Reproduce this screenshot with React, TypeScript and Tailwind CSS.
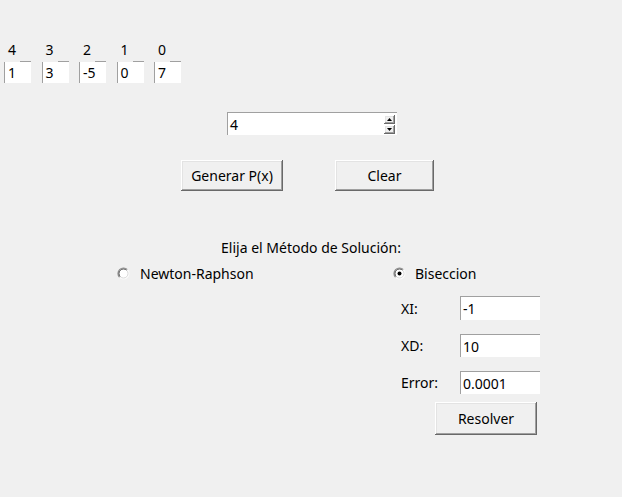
import { useState } from 'react';

const coefs = [
    { grado: '4', valor: '1' },
    { grado: '3', valor: '3' },
    { grado: '2', valor: '-5' },
    { grado: '1', valor: '0' },
    { grado: '0', valor: '7' },
];

const btnClass =
    'bg-[#f0f0f0] text-black shadow-[inset_-1px_-1px_#696969,inset_1px_1px_#ffffff,inset_-2px_-2px_#a0a0a0,inset_2px_2px_#e3e3e3]';

function Radio({ checked }: { checked: boolean }) {
    return (
        <svg width="13" height="13" viewBox="0 0 13 13" className="shrink-0">
            <circle cx="6.5" cy="6.5" r="5.5" fill="#ffffff" />
            <path d="M2.6 10.4 A5.5 5.5 0 0 1 10.4 2.6" fill="none" stroke="#8a8a8a" strokeWidth="1.2" />
            <path d="M3.3 9.7 A4.5 4.5 0 0 1 9.7 3.3" fill="none" stroke="#505050" strokeWidth="1" />
            <path d="M10.4 2.6 A5.5 5.5 0 0 1 2.6 10.4" fill="none" stroke="#ffffff" strokeWidth="1" />
            <path d="M9.7 3.3 A4.5 4.5 0 0 1 3.3 9.7" fill="none" stroke="#d8d8d8" strokeWidth="1" />
            {checked && <circle cx="6.5" cy="6.5" r="2" fill="#000000" />}
        </svg>
    );
}

function Entry({ value, className }: { value: string; className: string }) {
    return (
        <div className={`bg-white border-t border-l border-[#a0a0a0] pl-[2px] flex items-center text-black ${className}`}>
            {value}
        </div>
    );
}

export default function App() {
    const [metodo, setMetodo] = useState<'newton' | 'biseccion'>('biseccion');

    return (
        <div className="w-[622px] h-[497px] bg-[#f0f0f0] text-[14px] leading-[17px] text-black font-['Noto_Sans','Open_Sans',sans-serif] overflow-hidden">
            {/* Coeficientes */}
            <div className="flex gap-[10.5px] pl-[4px] pt-[41px]">
                {coefs.map((c) => (
                    <div key={c.grado} className="w-[27px] flex flex-col">
                        <span className="pl-[4px] h-[20px]">{c.grado}</span>
                        <div className="h-[1px] flex justify-end">
                            <div className="w-[11px] h-[1px] bg-[#a0a0a0]" />
                        </div>
                        <div className="h-[21px] bg-white border-l border-[#a0a0a0] pl-[3px] flex items-center">
                            {c.valor}
                        </div>
                    </div>
                ))}
            </div>

            {/* Grado */}
            <div className="pl-[227px] mt-[29px]">
                <div className="w-[170px] h-[23px] bg-white border-t border-l border-[#a0a0a0] flex items-center justify-between pl-[2px] pr-[2px]">
                    <span>4</span>
                    <div className="flex flex-col gap-[1px]">
                        <div className={`w-[11px] h-[9px] flex items-center justify-center ${btnClass}`}>
                            <svg width="5" height="3" viewBox="0 0 5 3"><path d="M0 3 L2.5 0 L5 3 Z" fill="#000" /></svg>
                        </div>
                        <div className={`w-[11px] h-[9px] flex items-center justify-center ${btnClass}`}>
                            <svg width="5" height="3" viewBox="0 0 5 3"><path d="M0 0 L2.5 3 L5 0 Z" fill="#000" /></svg>
                        </div>
                    </div>
                </div>
            </div>

            {/* Botones */}
            <div className="flex pl-[181px] mt-[25px] gap-[52px]">
                <button className={`w-[102px] h-[31px] ${btnClass}`}>Generar P(x)</button>
                <button className={`w-[99px] h-[31px] ${btnClass}`}>Clear</button>
            </div>

            {/* Metodo */}
            <div className="text-center mt-[48px]">Elija el Método de Solución:</div>
            <div className="flex items-center mt-[9px] pl-[117px]">
                <label className="flex items-center gap-[10px] w-[276px]" onClick={() => setMetodo('newton')}>
                    <Radio checked={metodo === 'newton'} />
                    <span>Newton-Raphson</span>
                </label>
                <label className="flex items-center gap-[9px]" onClick={() => setMetodo('biseccion')}>
                    <Radio checked={metodo === 'biseccion'} />
                    <span>Biseccion</span>
                </label>
            </div>

            {/* Parametros biseccion */}
            <div className="pl-[401px] mt-[14px] flex flex-col">
                <div className="flex items-center h-[24px]">
                    <span className="w-[59px]">XI:</span>
                    <Entry value="-1" className="w-[80px] h-[24px]" />
                </div>
                <div className="flex items-center h-[23px] mt-[14px]">
                    <span className="w-[59px]">XD:</span>
                    <Entry value="10" className="w-[80px] h-[23px]" />
                </div>
                <div className="flex items-center h-[23px] mt-[14px]">
                    <span className="w-[59px]">Error:</span>
                    <Entry value="0.0001" className="w-[80px] h-[23px]" />
                </div>
                <div className="pl-[34px] mt-[8px]">
                    <button className={`w-[102px] h-[33px] ${btnClass}`}>Resolver</button>
                </div>
            </div>
        </div>
    );
}
